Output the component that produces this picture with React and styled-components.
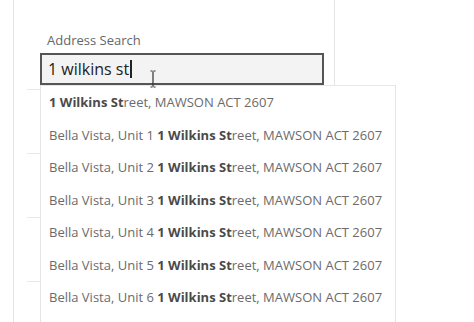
import React from 'react';
import styled, { createGlobalStyle } from 'styled-components';

const GlobalStyle = createGlobalStyle`
  html, body {
    margin: 0;
    padding: 0;
    background: #ffffff;
  }
  body {
    font-family: 'Open Sans', 'Noto Sans', sans-serif;
    overflow: hidden;
  }
`;

const Page = styled.div`
  width: 474px;
  height: 322px;
  background: #fff;
  position: relative;
  overflow: hidden;
`;

const Panel = styled.div`
  margin-left: 13px;
  width: 322px;
  height: 322px;
  border-left: 1px solid #e4e4e4;
  border-right: 1px solid #e4e4e4;
  padding-top: 32px;
  box-sizing: border-box;
`;

const Label = styled.div`
  margin-left: 33px;
  font-size: 13px;
  line-height: 16px;
  color: #666;
  margin-bottom: 5px;
`;

const Field = styled.div`
  position: relative;
  margin-left: 26px;
  width: 284px;
`;

const Input = styled.div`
  height: 32px;
  box-sizing: border-box;
  border: 2px solid #555;
  background: #f3f3f3;
  display: flex;
  align-items: center;
  padding-left: 6px;
  font-size: 16px;
  color: #222;
`;

const Caret = styled.span`
  display: inline-block;
  width: 1.5px;
  height: 18px;
  background: #222;
  margin-left: 1px;
`;

const Rows = styled.div`
  margin-left: 13px;
  margin-top: 4px;
`;

const Row = styled.div`
  height: 63px;
  border-top: 1px solid #e8e8e8;
`;

const Dropdown = styled.ul`
  position: absolute;
  top: 100%;
  left: 0;
  width: 356px;
  margin: 0;
  padding: 0;
  list-style: none;
  background: #fff;
  border: 1px solid #e4e4e4;
  border-top-color: #e8e8e8;
  height: 244px;
  box-sizing: border-box;
  z-index: 2;
`;

const Option = styled.li`
  height: 32.5px;
  display: flex;
  align-items: center;
  padding-left: 8px;
  font-size: 13px;
  color: #6b6b6b;
  white-space: nowrap;
`;

const Match = styled.b`
  font-weight: 700;
  color: #4a4a4a;
  white-space: pre;
`;

const Pointer = styled.svg`
  position: absolute;
  left: 110px;
  top: 17px;
  z-index: 3;
`;

const units = [null, 1, 2, 3, 4, 5, 6];

export default function App() {
  return (
    <Page>
      <GlobalStyle />
      <Panel>
        <Label>Address Search</Label>
        <Field>
          <Input>
            1 wilkins st
            <Caret />
          </Input>
          <Pointer width="6" height="18" viewBox="0 0 6 18">
            <path d="M0.5 1 H2.5 M3.5 1 H5.5 M3 1.5 V16.5 M0.5 17 H2.5 M3.5 17 H5.5" stroke="#333" strokeWidth="1.2" fill="none" />
          </Pointer>
          <Dropdown>
            {units.map((u) => (
              <Option key={String(u)}>
                {u !== null && <span>Bella Vista, Unit {u}&nbsp;</span>}
                <Match>1 Wilkins St</Match>reet, MAWSON ACT 2607
              </Option>
            ))}
          </Dropdown>
        </Field>
        <Rows>
          <Row />
          <Row />
          <Row />
          <Row />
        </Rows>
      </Panel>
    </Page>
  );
}
